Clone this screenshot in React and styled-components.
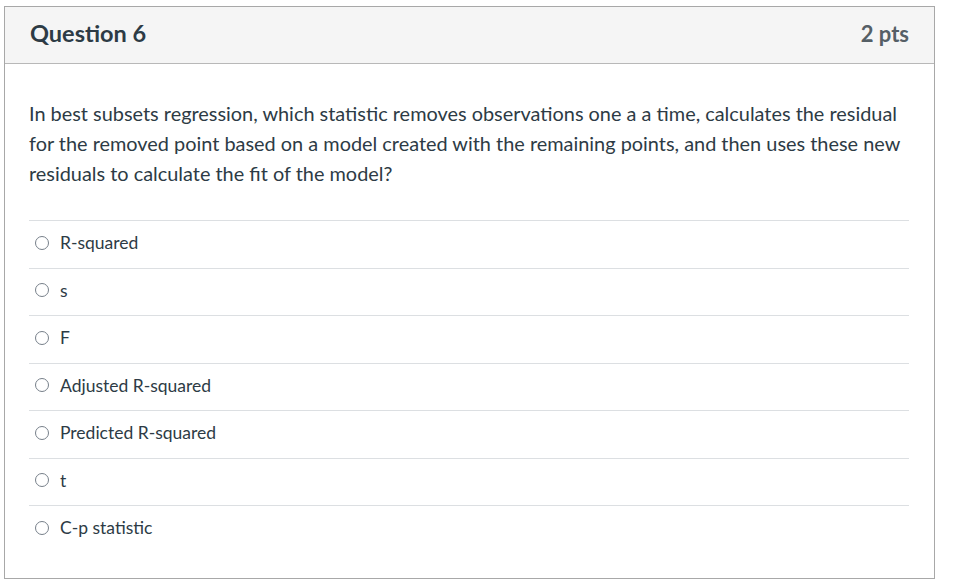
import React from "react";
import styled, { createGlobalStyle } from "styled-components";

const GlobalStyle = createGlobalStyle`
  body {
    margin: 0;
    background: #ffffff;
    font-family: Lato, "Liberation Sans", sans-serif;
    color: #2d3b45;
  }
`;

const Page = styled.div`
  padding: 6px 0 0 4px;
`;

const Card = styled.div`
  width: 929px;
  border: 1px solid #a8a8a8;
  background: #fff;
`;

const Header = styled.div`
  height: 57px;
  box-sizing: border-box;
  background: #f5f5f5;
  border-bottom: 1px solid #b8b8b8;
  display: flex;
  align-items: center;
  justify-content: space-between;
  padding: 0 25px 4px 25px;
`;

const Title = styled.h2`
  margin: 0;
  font-size: 23.5px;
  font-weight: 700;
  color: #2d3b45;
`;

const Points = styled.div`
  font-size: 22px;
  font-weight: 700;
  color: #555f66;
`;

const Body = styled.div`
  padding: 34px 25px 25px 24px;
`;

const Prompt = styled.p`
  margin: 0 0 32px 0;
  font-size: 19.9px;
  line-height: 30px;
`;

const Answers = styled.div`
  display: flex;
  flex-direction: column;
`;

const Answer = styled.label`
  display: flex;
  align-items: center;
  height: 47.5px;
  box-sizing: border-box;
  border-top: 1px solid #dcdfe2;
  padding: 0 0 3px 6px;
  font-size: 17.5px;
  color: #2d3b45;
  cursor: pointer;
`;

const Radio = styled.span`
  width: 12px;
  height: 12px;
  border: 1px solid #77808a;
  border-radius: 50%;
  margin-right: 11px;
  flex-shrink: 0;
  background: #fff;
`;

const options = [
  "R-squared",
  "s",
  "F",
  "Adjusted R-squared",
  "Predicted R-squared",
  "t",
  "C-p statistic",
];

export default function App() {
  return (
    <>
      <GlobalStyle />
      <Page>
        <Card>
          <Header>
            <Title>Question 6</Title>
            <Points>2 pts</Points>
          </Header>
          <Body>
            <Prompt>
              In best subsets regression, which statistic removes observations
              one a a time, calculates the residual for the removed point based
              on a model created with the remaining points, and then uses these
              new residuals to calculate the fit of the model?
            </Prompt>
            <Answers>
              {options.map((o) => (
                <Answer key={o}>
                  <Radio />
                  {o}
                </Answer>
              ))}
            </Answers>
          </Body>
        </Card>
      </Page>
    </>
  );
}
